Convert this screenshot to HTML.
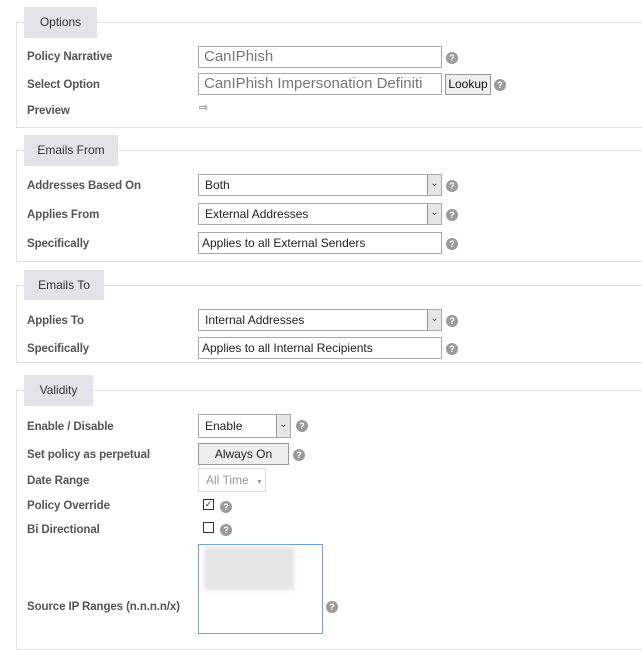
<!DOCTYPE html>
<html><head><meta charset="utf-8"><style>
*{box-sizing:border-box;margin:0;padding:0}
body{width:642px;height:626px;background:#fff;position:relative;overflow:hidden;font-family:"Liberation Sans",sans-serif;font-size:12px;color:#333}
.a{position:absolute}
.fs{position:absolute;left:16px;right:-2px;border:1px solid #e2e2e2}
.lg{position:absolute;left:24px;background:#e3e3e9;color:#333;font-size:12px;text-align:center}
.lb{position:absolute;left:27px;font-weight:bold;color:#555;font-size:11.5px;letter-spacing:-0.1px}
.in{position:absolute;left:198px;width:244px;height:22px;border:1px solid #aaa;background:#fff;padding:0 6px;line-height:20px;font-size:12px;color:#222;white-space:nowrap;overflow:hidden}
.big{font-size:15px;color:#777;line-height:20px;padding-left:5px}
.ar{position:absolute;right:0;top:0;bottom:0;width:14px;background:#e6e6e6;border-left:1px solid #999;font-size:10px;text-align:center;line-height:18px;color:#555}
.h{position:absolute;width:12px;height:12px;border-radius:50%;background:#9a9a9a;color:#fff;font-size:9px;font-weight:bold;text-align:center;line-height:12px}
.cb{position:absolute;left:203px;width:11px;height:11px;border:1px solid #333;background:#fff;font-size:9px;line-height:9px;text-align:center}
</style></head><body>

<div class="fs" style="top:22px;height:106px"></div>
<div class="lg" style="top:7px;width:73px;height:31px;line-height:31px">Options</div>
<div class="lb" style="top:51px">Policy Narrative</div>
<div class="in big" style="top:46px">CanIPhish</div>
<div class="h" style="left:446px;top:52px">?</div>
<div class="lb" style="top:79px">Select Option</div>
<div class="in big" style="top:73px">CanIPhish Impersonation Definiti</div>
<div class="a" style="left:445px;top:74px;width:46px;height:21px;border:1px solid #999;background:#eee;font-size:12px;line-height:19px;text-align:center;color:#111">Lookup</div>
<div class="h" style="left:494px;top:79px">?</div>
<div class="lb" style="top:105px">Preview</div>
<div class="a" style="left:199px;top:101px;font-size:11px;color:#666">⇨</div>

<div class="fs" style="top:150px;height:112px"></div>
<div class="lg" style="top:135px;width:94px;height:31px;line-height:31px">Emails From</div>
<div class="lb" style="top:180px">Addresses Based On</div>
<div class="in" style="top:174px">Both<div class="ar">⌄</div></div>
<div class="h" style="left:446px;top:180px">?</div>
<div class="lb" style="top:209px">Applies From</div>
<div class="in" style="top:203px">External Addresses<div class="ar">⌄</div></div>
<div class="h" style="left:446px;top:209px">?</div>
<div class="lb" style="top:238px">Specifically</div>
<div class="in" style="top:232px;padding-left:3px">Applies to all External Senders</div>
<div class="h" style="left:446px;top:238px">?</div>

<div class="fs" style="top:285px;height:78px"></div>
<div class="lg" style="top:270px;width:80px;height:30px;line-height:30px">Emails To</div>
<div class="lb" style="top:315px">Applies To</div>
<div class="in" style="top:309px">Internal Addresses<div class="ar">⌄</div></div>
<div class="h" style="left:446px;top:315px">?</div>
<div class="lb" style="top:343px">Specifically</div>
<div class="in" style="top:337px;padding-left:3px">Applies to all Internal Recipients</div>
<div class="h" style="left:446px;top:343px">?</div>

<div class="fs" style="top:390px;height:260px"></div>
<div class="lg" style="top:375px;width:69px;height:31px;line-height:31px">Validity</div>
<div class="lb" style="top:421px">Enable / Disable</div>
<div class="in" style="top:414px;width:93px;height:24px;line-height:22px">Enable<div class="ar" style="line-height:20px">⌄</div></div>
<div class="h" style="left:296px;top:420px">?</div>
<div class="lb" style="top:449px">Set policy as perpetual</div>
<div class="a" style="left:198px;top:443px;width:91px;height:22px;border:1px solid #999;background:#eee;text-align:center;line-height:20px;color:#222">Always On</div>
<div class="h" style="left:293px;top:449px">?</div>
<div class="lb" style="top:475px">Date Range</div>
<div class="a" style="left:198px;top:468px;width:68px;height:24px;border:1px solid #ddd;color:#999;line-height:22px;padding-left:7px">All Time <span style="font-size:7px;margin-left:4px">▼</span></div>
<div class="lb" style="top:500px">Policy Override</div>
<div class="cb" style="top:499px">✓</div>
<div class="h" style="left:220px;top:501px">?</div>
<div class="lb" style="top:524px">Bi Directional</div>
<div class="cb" style="top:522px"></div>
<div class="h" style="left:220px;top:524px">?</div>
<div class="a" style="left:198px;top:544px;width:125px;height:90px;border:1px solid #6aa0dc;background:#fff"></div>
<div class="a" style="left:204px;top:547px;width:90px;height:43px;background:#e4e4e4;filter:blur(2px)"></div>
<div class="lb" style="top:601px">Source IP Ranges (n.n.n.n/x)</div>
<div class="h" style="left:326px;top:601px">?</div>
</body></html>
